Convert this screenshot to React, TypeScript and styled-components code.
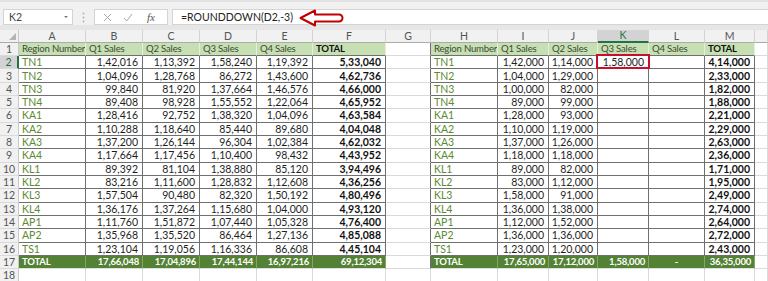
import styled, { createGlobalStyle, css } from "styled-components";

const GlobalStyle = createGlobalStyle`
  html, body {
    margin: 0;
    padding: 0;
    background: #ffffff;
    overflow: hidden;
  }
  body {
    font-family: Lato, "Open Sans", "Liberation Sans", sans-serif;
  }
`;

type Kind = "blank" | "head" | "body" | "total";

const COLS = ["A", "B", "C", "D", "E", "F", "G", "H", "I", "J", "K", "L", "M", ""];
const WIDTHS = "19px 67px 57px 57px 57px 56px 73px 45px 67px 51px 49px 51px 56px 50px 1fr";

const HEAD = ["Region Number", "Q1 Sales", "Q2 Sales", "Q3 Sales", "Q4 Sales", "TOTAL"];

const LEFT: string[][] = [
    ["TN1", "1,42,016", "1,13,392", "1,58,240", "1,19,392", "5,33,040"],
    ["TN2", "1,04,096", "1,28,768", "86,272", "1,43,600", "4,62,736"],
    ["TN3", "99,840", "81,920", "1,37,664", "1,46,576", "4,66,000"],
    ["TN4", "89,408", "98,928", "1,55,552", "1,22,064", "4,65,952"],
    ["KA1", "1,28,416", "92,752", "1,38,320", "1,04,096", "4,63,584"],
    ["KA2", "1,10,288", "1,18,640", "85,440", "89,680", "4,04,048"],
    ["KA3", "1,37,200", "1,26,144", "96,304", "1,02,384", "4,62,032"],
    ["KA4", "1,17,664", "1,17,456", "1,10,400", "98,432", "4,43,952"],
    ["KL1", "89,392", "81,104", "1,38,880", "85,120", "3,94,496"],
    ["KL2", "83,216", "1,11,600", "1,28,832", "1,12,608", "4,36,256"],
    ["KL3", "1,57,504", "90,480", "82,320", "1,50,192", "4,80,496"],
    ["KL4", "1,36,176", "1,37,264", "1,15,680", "1,04,000", "4,93,120"],
    ["AP1", "1,11,760", "1,51,872", "1,07,440", "1,05,328", "4,76,400"],
    ["AP2", "1,35,968", "1,35,520", "86,464", "1,27,136", "4,85,088"],
    ["TS1", "1,23,104", "1,19,056", "1,16,336", "86,608", "4,45,104"],
];
const LEFT_TOTAL = ["TOTAL", "17,66,048", "17,04,896", "17,44,144", "16,97,216", "69,12,304"];

const RIGHT: string[][] = [
    ["TN1", "1,42,000", "1,14,000", "1,58,000", "", "4,14,000"],
    ["TN2", "1,04,000", "1,29,000", "", "", "2,33,000"],
    ["TN3", "1,00,000", "82,000", "", "", "1,82,000"],
    ["TN4", "89,000", "99,000", "", "", "1,88,000"],
    ["KA1", "1,28,000", "93,000", "", "", "2,21,000"],
    ["KA2", "1,10,000", "1,19,000", "", "", "2,29,000"],
    ["KA3", "1,37,000", "1,26,000", "", "", "2,63,000"],
    ["KA4", "1,18,000", "1,18,000", "", "", "2,36,000"],
    ["KL1", "89,000", "82,000", "", "", "1,71,000"],
    ["KL2", "83,000", "1,12,000", "", "", "1,95,000"],
    ["KL3", "1,58,000", "91,000", "", "", "2,49,000"],
    ["KL4", "1,36,000", "1,38,000", "", "", "2,74,000"],
    ["AP1", "1,12,000", "1,52,000", "", "", "2,64,000"],
    ["AP2", "1,36,000", "1,36,000", "", "", "2,72,000"],
    ["TS1", "1,23,000", "1,20,000", "", "", "2,43,000"],
];
const RIGHT_TOTAL = ["TOTAL", "17,65,000", "17,12,000", "1,58,000", "-", "36,35,000"];

const Page = styled.div`
  width: 768px;
  height: 281px;
  overflow: hidden;
  display: flex;
  flex-direction: column;
  background: #ffffff;
`

const FormulaBar = styled.div`
  height: 30px;
  box-sizing: border-box;
  display: flex;
  align-items: flex-start;
  padding: 7px 0 0 3px;
  background: #f1f1f1;
  border-top: 2px solid #e2e2e2;
  border-bottom: 5px solid #e6e6e6;
`

const NameBox = styled.div`
  width: 70px;
  height: 16px;
  box-sizing: border-box;
  display: flex;
  align-items: center;
  justify-content: space-between;
  padding: 0 4px 0 5px;
  background: #ffffff;
  border: 1px solid #d4d4d4;
  font-size: 10.5px;
  color: #444444;
`

const Caret = styled.span`
  width: 0;
  height: 0;
  border-left: 2px solid transparent;
  border-right: 2px solid transparent;
  border-top: 2px solid #777777;
`

const Grip = styled.div`
  width: 21px;
  height: 16px;
  display: flex;
  align-items: center;
  justify-content: center;
`

const IconBox = styled.div`
  width: 74px;
  height: 16px;
  box-sizing: border-box;
  display: flex;
  align-items: center;
  padding: 0 0 0 8px;
  gap: 11px;
  background: #ffffff;
  border: 1px solid #d4d4d4;
  margin-right: 4px;
`

const Fx = styled.span`
  font-family: "Liberation Serif", "DejaVu Serif", serif;
  font-style: italic;
  font-size: 11px;
  color: #555555;
  margin-left: 3px;
`

const FormulaInput = styled.div`
  flex: 1;
  height: 16px;
  box-sizing: border-box;
  display: flex;
  align-items: center;
  padding-left: 8px;
  background: #ffffff;
  border: 1px solid #d4d4d4;
  border-right: none;
  font-size: 10.5px;
  color: #222222;
`

const Arrow = styled.svg`
  margin-left: 6px;
  margin-top: 1px;
  flex: none;
`

const Sheet = styled.div`
  display: grid;
  grid-template-columns: ${WIDTHS};
  grid-template-rows: 12.7px repeat(18, 13.33px);
  font-size: 10.5px;
  line-height: 12px;
`

const Corner = styled.div`
  background: #f1f1f1;
  border-right: 1px solid #c8c8c8;
  border-bottom: 1px solid #ababab;
  display: flex;
  align-items: flex-end;
  justify-content: flex-end;
  padding: 0 2px 2px 0;
  box-sizing: border-box;
`

const CornerMark = styled.span`
  width: 0;
  height: 0;
  border-left: 7px solid transparent;
  border-bottom: 7px solid #b4b4b4;
`

const ColHead = styled.div<{ $active?: boolean }>`
  box-sizing: border-box;
  display: flex;
  align-items: center;
  justify-content: center;
  background: ${({ $active }) => ($active ? "#d3d3d3" : "#f1f1f1")};
  color: ${({ $active }) => ($active ? "#217346" : "#555555")};
  border-right: 1px solid #d4d4d4;
  border-bottom: ${({ $active }) => ($active ? "2px solid #217346" : "1px solid #ababab")};
`

const RowHead = styled.div<{ $active?: boolean }>`
  box-sizing: border-box;
  display: flex;
  align-items: center;
  justify-content: center;
  background: ${({ $active }) => ($active ? "#d3d3d3" : "#f1f1f1")};
  color: ${({ $active }) => ($active ? "#217346" : "#555555")};
  border-right: ${({ $active }) => ($active ? "2px solid #217346" : "1px solid #c8c8c8")};
  border-bottom: 1px solid #dadada;
`

const kindStyles = {
    blank: css`
      background: #ffffff;
      border-right: 1px solid #dadada;
      border-bottom: 1px solid #dadada;
    `,
    head: css`
      background: #c6e0b4;
      color: #3d4a33;
      font-size: 9.6px;
      letter-spacing: -0.2px;
      border-right: 1px solid #e4efdb;
      border-bottom: 1px solid #6f6f6f;
    `,
    body: css`
      background: #ffffff;
      color: #1e1e1e;
      border-right: 1px solid #6f6f6f;
      border-bottom: 1px solid #6f6f6f;
    `,
    total: css`
      background: #548235;
      color: #ffffff;
      font-weight: 700;
      font-size: 9.5px;
      letter-spacing: -0.2px;
      padding-right: 3px;
      border-right: 1px solid #84a46c;
      border-bottom: 1px solid #e0e0e0;
    `,
};

const Cell = styled.div<{
    $kind: Kind;
    $align?: "left" | "right" | "center";
    $bold?: boolean;
    $region?: boolean;
    $edge?: boolean;
    $marked?: boolean;
}>`
  position: relative;
  box-sizing: border-box;
  display: flex;
  align-items: center;
  justify-content: ${({ $align }) =>
    $align === "right" ? "flex-end" : $align === "center" ? "center" : "flex-start"};
  padding: 0 4px 0 3px;
  white-space: nowrap;
  overflow: hidden;
  ${({ $kind }) => kindStyles[$kind]};
  ${({ $bold }) => $bold && css`font-weight: 700; color: #111111;`};
  ${({ $region }) => $region && css`color: #5b8a2f;`};
  ${({ $edge }) => $edge && css`border-right: 1px solid #6f6f6f;`};
  ${({ $marked }) =>
    $marked &&
    css`
      overflow: visible;
      &::after {
        content: "";
        position: absolute;
        left: -2px;
        top: -2px;
        right: -2px;
        bottom: -1px;
        border: 2px solid #c8102e;
        z-index: 2;
      }
    `};
`

function CrossIcon() {
    return (
        <svg width="9" height="9" viewBox="0 0 9 9">
            <path d="M1 1L8 8M8 1L1 8" stroke="#a9a9a9" strokeWidth="1" fill="none" />
        </svg>
    );
}

function CheckIcon() {
    return (
        <svg width="10" height="9" viewBox="0 0 10 9">
            <path d="M1 5L3.8 8L9 1" stroke="#a9a9a9" strokeWidth="1" fill="none" />
        </svg>
    );
}

function GripIcon() {
    return (
        <svg width="3" height="11" viewBox="0 0 3 11">
            <circle cx="1.5" cy="1.5" r="0.9" fill="#b0b0b0" />
            <circle cx="1.5" cy="5.5" r="0.9" fill="#b0b0b0" />
            <circle cx="1.5" cy="9.5" r="0.9" fill="#b0b0b0" />
        </svg>
    );
}

function RedArrow() {
    return (
        <Arrow width="46" height="18" viewBox="0 0 46 18">
            <path
                d="M1.5 9 L16 1.5 L16 5.5 L40 5.5 A3.5 3.5 0 0 1 40 12.5 L16 12.5 L16 16.5 Z"
                fill="#ffffff"
                stroke="#c00000"
                strokeWidth="2"
                strokeLinejoin="round"
            />
        </Arrow>
    );
}

function TableRow({ values, kind, marked }: { values: string[]; kind: "head" | "body" | "total"; marked?: number }) {
    return (
        <>
            {values.map((v, i) => {
                const first = i === 0;
                const last = i === values.length - 1;
                let align: "left" | "right" | "center" = first ? "left" : "right";
                if (kind === "head") align = "left";
                if (kind === "total" && v === "-") align = "center";
                return (
                    <Cell
                        key={i}
                        $kind={kind}
                        $align={align}
                        $bold={(kind === "body" && last) || (kind === "head" && last)}
                        $region={kind === "body" && first}
                        $marked={marked === i}
                    >
                        {v}
                    </Cell>
                );
            })}
        </>
    );
}

function Row({
    r,
    left,
    right,
    kind,
}: {
    r: number;
    left: string[] | null;
    right: string[] | null;
    kind: "head" | "body" | "total";
}) {
    return (
        <>
            <RowHead $active={r === 2}>{r}</RowHead>
            {left ? (
                <>
                    <TableRow values={left} kind={kind} />
                    <Cell $kind="blank" $edge />
                    <TableRow values={right as string[]} kind={kind} marked={r === 2 ? 3 : undefined} />
                    <Cell $kind="blank" />
                </>
            ) : (
                Array.from({ length: 14 }, (_, i) => <Cell key={i} $kind="blank" />)
            )}
        </>
    );
}

export default function App() {
    const rows = Array.from({ length: 18 }, (_, i) => i + 1);

    return (
        <Page>
            <GlobalStyle />
            <FormulaBar>
                <NameBox>
                    K2
                    <Caret />
                </NameBox>
                <Grip>
                    <GripIcon />
                </Grip>
                <IconBox>
                    <CrossIcon />
                    <CheckIcon />
                    <Fx>fx</Fx>
                </IconBox>
                <FormulaInput>
                    =ROUNDDOWN(D2,-3)
                    <RedArrow />
                </FormulaInput>
            </FormulaBar>
            <Sheet>
                <Corner>
                    <CornerMark />
                </Corner>
                {COLS.map((c, i) => (
                    <ColHead key={i} $active={c === "K"}>
                        {c}
                    </ColHead>
                ))}
                {rows.map((r) => {
                    const idx = r - 2;
                    let left: string[] | null = null;
                    let right: string[] | null = null;
                    let kind: "head" | "body" | "total" = "body";
                    if (r === 1) {
                        left = HEAD;
                        right = HEAD;
                        kind = "head";
                    } else if (r >= 2 && r <= 16) {
                        left = LEFT[idx];
                        right = RIGHT[idx];
                    } else if (r === 17) {
                        left = LEFT_TOTAL;
                        right = RIGHT_TOTAL;
                        kind = "total";
                    }
                    return <Row key={r} r={r} left={left} right={right} kind={kind} />;
                })}
            </Sheet>
        </Page>
    );
}
